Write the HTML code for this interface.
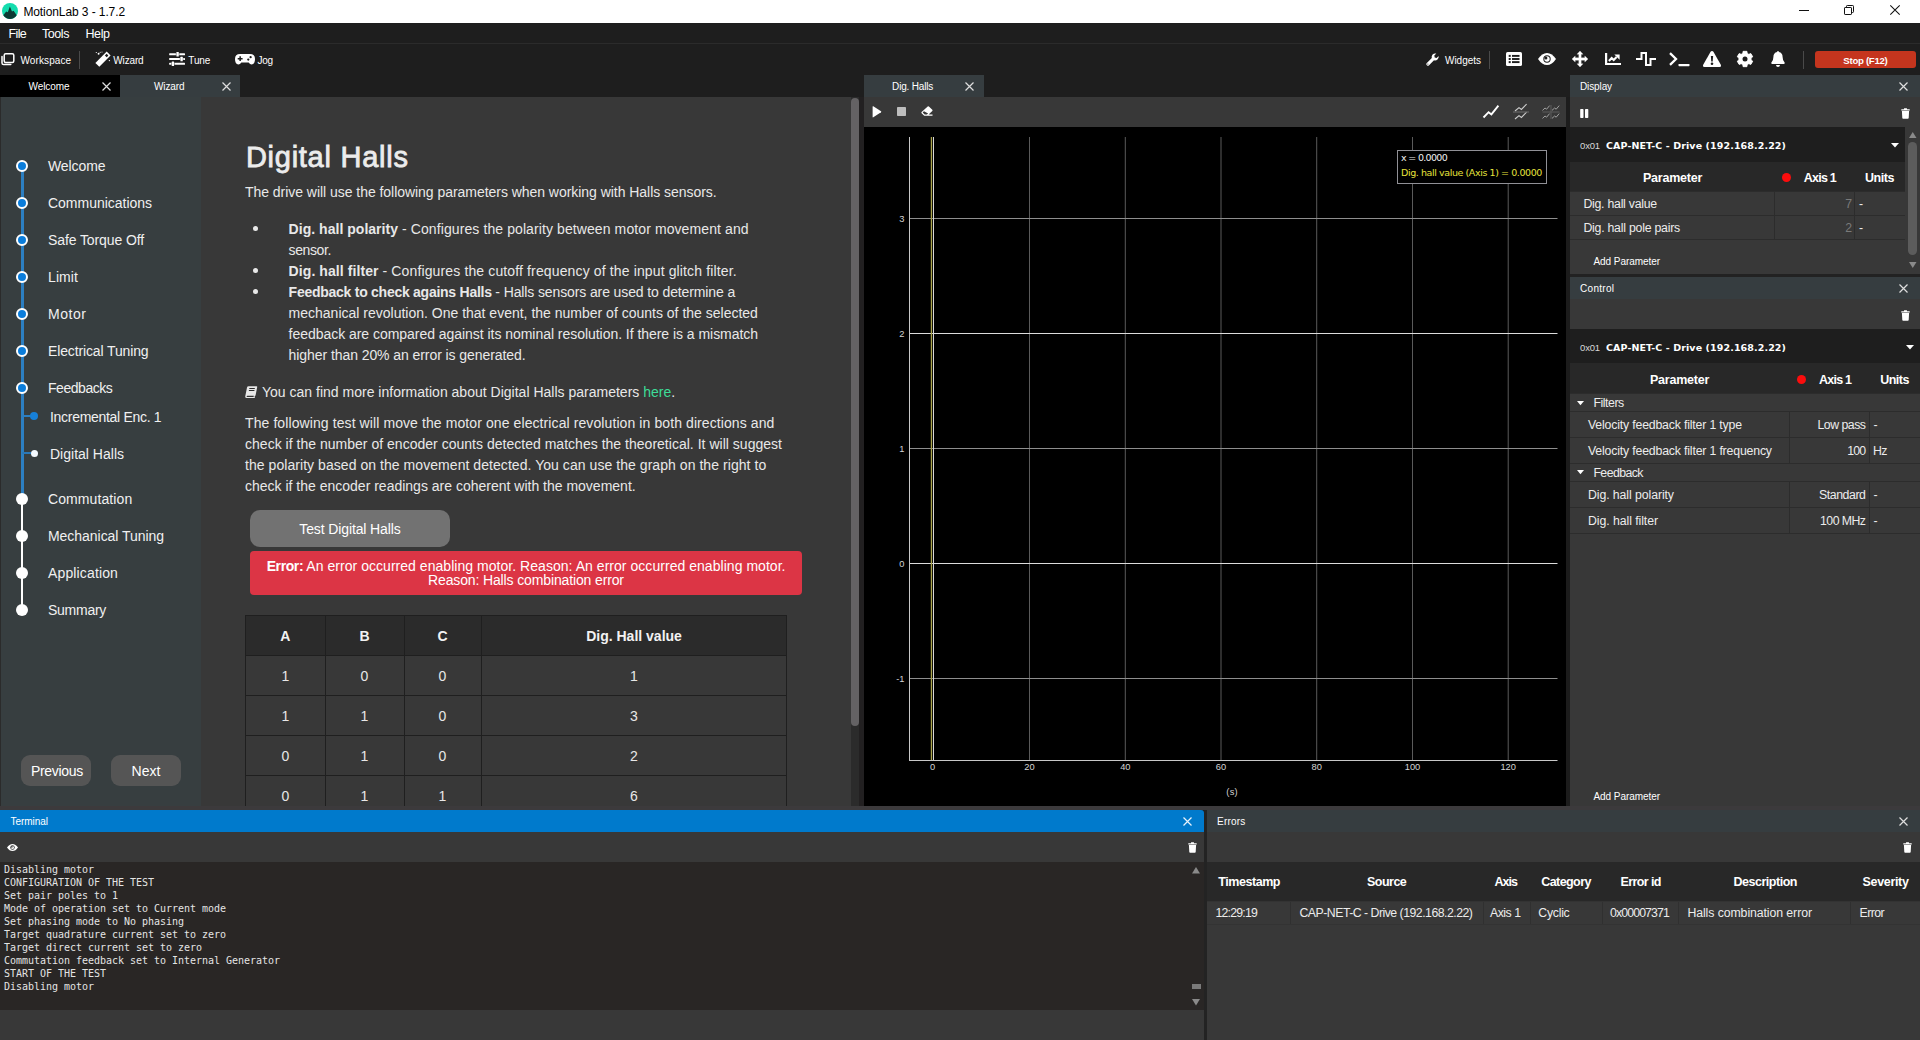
<!DOCTYPE html>
<html><head><meta charset="utf-8"><title>MotionLab 3 - 1.7.2</title>
<style>
*{box-sizing:border-box;margin:0;padding:0}
html,body{width:1920px;height:1040px;overflow:hidden;background:#1e1e1e;font-family:"Liberation Sans",sans-serif;color:#fff}
.a{position:absolute}
.t{position:absolute;white-space:pre;line-height:1}
svg{position:absolute;overflow:visible}
</style></head><body>
<div class="a" style="left:0px;top:0px;width:1920px;height:23px;background:#fff;"></div>
<svg style="left:1px;top:2.2px" width="18" height="18" viewBox="0 0 18 18"><circle cx="9" cy="9" r="8" fill="#14dcae"/><path d="M2.3 13.3 L5.2 9.6 L6.8 10.2 L8.9 4.4 L11 9.4 L12.6 8.8 L15.7 13.3 A8 8 0 0 1 2.3 13.3Z" fill="#0d3a34"/></svg>
<div class="t" style="left:23.40px;top:6.00px;font-size:12px;letter-spacing:-0.093px;color:#000;">MotionLab 3 - 1.7.2</div>
<svg style="left:1799px;top:10px" width="12" height="2"><rect x="0" y="0" width="10" height="1" fill="#111"/></svg>
<svg style="left:1843px;top:4px" width="12" height="12" viewBox="0 0 12 12" fill="none" stroke="#111" stroke-width="1"><rect x="1.5" y="3.5" width="7" height="7" rx="0.6"/><path d="M3.5 3.5V2.3Q3.5 1.5 4.3 1.5H9.7Q10.5 1.5 10.5 2.3V7.7Q10.5 8.5 9.7 8.5H8.5"/></svg>
<svg style="left:1890px;top:5px" width="10" height="10" viewBox="0 0 10 10" stroke="#111" stroke-width="1.05"><path d="M0.3 0.3L9.7 9.7M9.7 0.3L0.3 9.7"/></svg>
<div class="a" style="left:0px;top:23px;width:1920px;height:21px;background:#1e1e1e;border-bottom:1px solid #2b2b2b"></div>
<div class="t" style="left:8.60px;top:27.75px;font-size:12.5px;letter-spacing:-0.689px;">File</div>
<div class="t" style="left:42.00px;top:27.75px;font-size:12.5px;letter-spacing:-0.438px;">Tools</div>
<div class="t" style="left:85.50px;top:27.75px;font-size:12.5px;letter-spacing:-0.405px;">Help</div>
<div class="a" style="left:0px;top:44px;width:1920px;height:31px;background:#1e1e1e;"></div>
<svg style="left:0.5px;top:53.3px" width="14" height="13" viewBox="0 0 14 13" ><rect x="3.2" y="0.8" width="9.6" height="8.6" rx="1.5" fill="none" stroke="#fff" stroke-width="1.5"/><path d="M1 3.5V10Q1 11.6 2.6 11.6H9.8" fill="none" stroke="#fff" stroke-width="1.5" stroke-linecap="round"/></svg>
<div class="t" style="left:20.50px;top:55.50px;font-size:10px;letter-spacing:0.097px;">Workspace</div>
<div class="a" style="left:79px;top:51px;width:1px;height:18px;background:#4a4a4a;"></div>
<svg style="left:95px;top:51px" width="16" height="16" viewBox="0 0 16 16" ><path d="M11.7 0.5L15.6 4.4L4.3 15.8L0.4 11.9Z" fill="#fff"/><path d="M11.6 2.7L13.4 4.5L11.7 6.2L9.9 4.4Z" fill="#1e1e1e"/><circle cx="1.3" cy="1.5" r="0.6" fill="#fff"/><circle cx="3.6" cy="2.8" r="0.95" fill="#fff"/><circle cx="5.2" cy="1.2" r="0.55" fill="#fff"/><circle cx="7" cy="1" r="0.5" fill="#fff"/><circle cx="14.4" cy="9.6" r="0.7" fill="#fff"/></svg>
<div class="t" style="left:113.30px;top:55.50px;font-size:10px;letter-spacing:-0.152px;">Wizard</div>
<svg style="left:169px;top:52.2px" width="16" height="14" viewBox="0 0 16 14" ><rect x="0.2" y="1.2000000000000002" width="15.8" height="2" rx="0.5" fill="#fff"/><rect x="7.3999999999999995" y="0.0" width="2.4" height="4.4" rx="0.5" fill="#fff"/><rect x="9.799999999999999" y="1.0000000000000002" width="0.55" height="2.4" fill="#1e1e1e" opacity="0.75"/><rect x="6.85" y="1.0000000000000002" width="0.55" height="2.4" fill="#1e1e1e" opacity="0.75"/><rect x="0.2" y="6" width="15.8" height="2" rx="0.5" fill="#fff"/><rect x="11.4" y="4.8" width="2.4" height="4.4" rx="0.5" fill="#fff"/><rect x="13.799999999999999" y="5.8" width="0.55" height="2.4" fill="#1e1e1e" opacity="0.75"/><rect x="10.85" y="5.8" width="0.55" height="2.4" fill="#1e1e1e" opacity="0.75"/><rect x="0.2" y="10.8" width="15.8" height="2" rx="0.5" fill="#fff"/><rect x="2.7" y="9.600000000000001" width="2.4" height="4.4" rx="0.5" fill="#fff"/><rect x="5.1" y="10.600000000000001" width="0.55" height="2.4" fill="#1e1e1e" opacity="0.75"/><rect x="2.15" y="10.600000000000001" width="0.55" height="2.4" fill="#1e1e1e" opacity="0.75"/></svg>
<div class="t" style="left:188.30px;top:55.50px;font-size:10px;letter-spacing:-0.130px;">Tune</div>
<svg style="left:234.8px;top:53.8px" width="20" height="11" viewBox="0 0 20 11" ><path d="M5 0H15Q20 0 20 5Q20 10.4 16.6 10.4Q15 10.4 13.6 8.4H6.4Q5 10.4 3.4 10.4Q0 10.4 0 5Q0 0 5 0Z" fill="#fff"/><path d="M4.4 2.2H5.9V3.9H7.6V5.4H5.9V7.1H4.4V5.4H2.7V3.9H4.4Z" fill="#1e1e1e"/><circle cx="15.6" cy="3.2" r="1.15" fill="#1e1e1e"/><circle cx="13.3" cy="5.6" r="1.15" fill="#1e1e1e"/></svg>
<div class="t" style="left:257.60px;top:55.50px;font-size:10px;letter-spacing:-0.342px;">Jog</div>
<svg style="left:1425.5px;top:52.5px" width="13" height="13" viewBox="0 0 13 13" ><path d="M12.6 2.9 L10.6 4.9 L8.7 4.5 L8.3 2.6 L10.3 0.6 Q8.2 -0.1 6.6 1.5 Q5.2 3 5.8 5 L0.6 10.2 Q-0.1 11 0.6 11.9 L1.1 12.4 Q2 13.1 2.8 12.4 L8 7.2 Q10 7.8 11.5 6.4 Q13.1 4.8 12.6 2.9Z" fill="#fff"/><circle cx="1.9" cy="11.1" r="0.55" fill="#1e1e1e"/></svg>
<div class="t" style="left:1445.00px;top:55.50px;font-size:10px;letter-spacing:-0.018px;">Widgets</div>
<div class="a" style="left:1489px;top:51px;width:1px;height:18px;background:#4a4a4a;"></div>
<svg style="left:1506px;top:52px" width="16" height="14" viewBox="0 0 16 14" ><rect x="0" y="0" width="16" height="14" rx="1.6" fill="#fff"/><rect x="2.7" y="2.9" width="2" height="2" fill="#1e1e1e"/><rect x="6" y="2.95" width="7.5" height="1.9" fill="#1e1e1e"/><rect x="2.7" y="6" width="2" height="2" fill="#1e1e1e"/><rect x="6" y="6.05" width="7.5" height="1.9" fill="#1e1e1e"/><rect x="2.7" y="9.1" width="2" height="2" fill="#1e1e1e"/><rect x="6" y="9.15" width="7.5" height="1.9" fill="#1e1e1e"/></svg>
<svg style="left:1538px;top:52.8px" width="18" height="12" viewBox="0 0 18 12" ><path d="M0 6Q4 0 9 0Q14 0 18 6Q14 12 9 12Q4 12 0 6Z" fill="#fff"/><circle cx="9" cy="6" r="3.7" fill="#1e1e1e"/><circle cx="9" cy="6" r="2.7" fill="#fff"/><circle cx="7.9" cy="4.9" r="1.5" fill="#1e1e1e"/></svg>
<svg style="left:1572px;top:51px" width="16" height="16" viewBox="0 0 16 16" ><path d="M8 0L11.0 3.2H9.2V6.8H12.8V5.0L16 8L12.8 11.0V9.2H9.2V12.8H11.0L8 16L5.0 12.8H6.8V9.2H3.2V11.0L0 8L3.2 5.0V6.8H6.8V3.2H5.0Z" fill="#fff" stroke="#fff" stroke-width="0.3" stroke-linejoin="round"/></svg>
<svg style="left:1605px;top:53px" width="16" height="12" viewBox="0 0 16 12" ><path d="M0 0H2.2V9.9H16V12H0Z" fill="#fff"/><path d="M3.9 8L6.7 5.1L8.7 7L11.6 4" fill="none" stroke="#fff" stroke-width="2.1" stroke-linejoin="miter"/><path d="M9.3 1.5H14.6V6.8Z" fill="#fff"/></svg>
<svg style="left:1636px;top:52px" width="20" height="14" viewBox="0 0 20 14" ><path d="M0 7H5.5V1H10V13H14.5V7H20" fill="none" stroke="#fff" stroke-width="2"/></svg>
<svg style="left:1668.5px;top:51.8px" width="21" height="15" viewBox="0 0 21 15" ><path d="M1 1.2L7 7L1 12.8" fill="none" stroke="#fff" stroke-width="2.3" stroke-linejoin="miter"/><rect x="9.5" y="12" width="11" height="2.2" rx="0.6" fill="#fff"/></svg>
<svg style="left:1703px;top:51px" width="18" height="16" viewBox="0 0 18 16" ><path d="M9 0Q9.9 0 10.4 0.8L17.8 13.8Q18.6 16 16.6 16H1.4Q-0.6 16 0.2 13.8L7.6 0.8Q8.1 0 9 0Z" fill="#fff"/><path d="M7.9 5H10.1L9.75 10.5H8.25Z" fill="#1e1e1e"/><circle cx="9" cy="12.7" r="1.3" fill="#1e1e1e"/></svg>
<svg style="left:1737px;top:51px" width="16" height="16" viewBox="0 0 16 16" ><path d="M6.08 0.33L9.92 0.33L10.16 2.38L11.88 3.36L13.82 2.54L15.74 5.79L14.04 7.02L14.04 8.98L15.74 10.21L13.82 13.46L11.88 12.64L10.16 13.62L9.92 15.67L6.08 15.67L5.84 13.62L4.12 12.64L2.18 13.46L0.26 10.21L1.96 8.98L1.96 7.02L0.26 5.79L2.18 2.54L4.12 3.36L5.84 2.38Z" fill="#fff" stroke="#fff" stroke-width="0.9" stroke-linejoin="round"/><circle cx="8" cy="8" r="2.5" fill="#1e1e1e"/></svg>
<svg style="left:1771px;top:51px" width="14" height="16" viewBox="0 0 14 16" ><path d="M7 0Q7.9 0 7.9 1Q11.6 1.8 11.6 6Q11.6 9.6 13.6 11.4Q14.2 12.6 13 13H1Q-0.2 12.6 0.4 11.4Q2.4 9.6 2.4 6Q2.4 1.8 6.1 1Q6.1 0 7 0Z" fill="#fff"/><path d="M5 14H9Q8.8 16 7 16Q5.2 16 5 14Z" fill="#fff"/></svg>
<div class="a" style="left:1803px;top:51px;width:1px;height:18px;background:#4a4a4a;"></div>
<div class="a" style="left:1815px;top:51px;width:101px;height:17px;background:#c5351e;border-radius:3px"></div>
<div class="t" style="left:1843.36px;top:55.70px;font-size:9.6px;letter-spacing:-0.287px;font-weight:bold;">Stop (F12)</div>
<div class="a" style="left:0px;top:75px;width:120px;height:22px;background:#000;"></div>
<div class="a" style="left:120px;top:75px;width:120px;height:22px;background:#363d40;"></div>
<div class="t" style="left:28.47px;top:81.50px;font-size:10px;letter-spacing:-0.069px;">Welcome</div>
<div class="t" style="left:154.00px;top:81.50px;font-size:10px;letter-spacing:-0.102px;">Wizard</div>
<svg style="left:102.3px;top:81.7px" width="9" height="9" viewBox="0 0 9 9" ><path d="M0.5 0.5L8.5 8.5M8.5 0.5L0.5 8.5" stroke="#dedede" stroke-width="1.2" fill="none"/></svg>
<svg style="left:222.3px;top:81.7px" width="9" height="9" viewBox="0 0 9 9" ><path d="M0.5 0.5L8.5 8.5M8.5 0.5L0.5 8.5" stroke="#dedede" stroke-width="1.2" fill="none"/></svg>
<div class="a" style="left:0px;top:97px;width:862px;height:709px;background:#2b2b2b;"></div>
<div class="a" style="left:1px;top:97px;width:200.3px;height:709px;background:#373e40;"></div>
<div class="a" style="left:201.3px;top:97px;width:649.7px;height:709px;background:#383838;"></div>
<div class="a" style="left:851px;top:97.5px;width:8px;height:628.5px;background:#646264;border-radius:4px"></div>
<div class="a" style="left:20.5px;top:166px;width:3px;height:333px;background:#2c7fc2;"></div>
<div class="a" style="left:21px;top:499px;width:2px;height:111px;background:#fff;"></div>
<div class="a" style="left:16px;top:160px;width:12px;height:12px;border-radius:50%;background:#0b7ddb;border:2px solid #fff"></div>
<div class="t" style="left:48.00px;top:159.00px;font-size:14px;letter-spacing:-0.097px;color:#f0f0f0;">Welcome</div>
<div class="a" style="left:16px;top:197px;width:12px;height:12px;border-radius:50%;background:#0b7ddb;border:2px solid #fff"></div>
<div class="t" style="left:48.00px;top:196.00px;font-size:14px;letter-spacing:-0.016px;color:#f0f0f0;">Communications</div>
<div class="a" style="left:16px;top:234px;width:12px;height:12px;border-radius:50%;background:#0b7ddb;border:2px solid #fff"></div>
<div class="t" style="left:48.00px;top:233.00px;font-size:14px;letter-spacing:-0.102px;color:#f0f0f0;">Safe Torque Off</div>
<div class="a" style="left:16px;top:271px;width:12px;height:12px;border-radius:50%;background:#0b7ddb;border:2px solid #fff"></div>
<div class="t" style="left:48.00px;top:270.00px;font-size:14px;letter-spacing:0.091px;color:#f0f0f0;">Limit</div>
<div class="a" style="left:16px;top:308px;width:12px;height:12px;border-radius:50%;background:#0b7ddb;border:2px solid #fff"></div>
<div class="t" style="left:48.00px;top:307.00px;font-size:14px;letter-spacing:0.547px;color:#f0f0f0;">Motor</div>
<div class="a" style="left:16px;top:345px;width:12px;height:12px;border-radius:50%;background:#0b7ddb;border:2px solid #fff"></div>
<div class="t" style="left:48.00px;top:344.00px;font-size:14px;letter-spacing:-0.129px;color:#f0f0f0;">Electrical Tuning</div>
<div class="a" style="left:16px;top:382px;width:12px;height:12px;border-radius:50%;background:#0b7ddb;border:2px solid #fff"></div>
<div class="t" style="left:48.00px;top:381.00px;font-size:14px;letter-spacing:-0.461px;color:#f0f0f0;">Feedbacks</div>
<div class="a" style="left:16px;top:493px;width:12px;height:12px;border-radius:50%;background:#fff"></div>
<div class="t" style="left:48.00px;top:492.00px;font-size:14px;letter-spacing:0.098px;color:#f0f0f0;">Commutation</div>
<div class="a" style="left:16px;top:530px;width:12px;height:12px;border-radius:50%;background:#fff"></div>
<div class="t" style="left:48.00px;top:529.00px;font-size:14px;letter-spacing:-0.040px;color:#f0f0f0;">Mechanical Tuning</div>
<div class="a" style="left:16px;top:567px;width:12px;height:12px;border-radius:50%;background:#fff"></div>
<div class="t" style="left:48.00px;top:566.00px;font-size:14px;letter-spacing:0.139px;color:#f0f0f0;">Application</div>
<div class="a" style="left:16px;top:604px;width:12px;height:12px;border-radius:50%;background:#fff"></div>
<div class="t" style="left:48.00px;top:603.00px;font-size:14px;letter-spacing:-0.268px;color:#f0f0f0;">Summary</div>
<div class="a" style="left:22px;top:415.2px;width:9px;height:2px;background:#2c7fc2;"></div>
<div class="a" style="left:30px;top:412.2px;width:8px;height:8px;background:#1780d8;border-radius:50%"></div>
<div class="t" style="left:50.00px;top:410.00px;font-size:14px;letter-spacing:-0.299px;color:#f0f0f0;">Incremental Enc. 1</div>
<div class="a" style="left:22px;top:452.2px;width:9px;height:1.8px;background:#2a78b8;"></div>
<div class="a" style="left:30.5px;top:449.6px;width:7px;height:7px;background:#f4faff;border-radius:50%"></div>
<div class="t" style="left:50.00px;top:447.00px;font-size:14px;letter-spacing:0.008px;color:#f0f0f0;">Digital Halls</div>
<div class="a" style="left:21px;top:755px;width:70px;height:31px;background:#555;border-radius:9px"></div>
<div class="a" style="left:111px;top:755px;width:70px;height:31px;background:#555;border-radius:9px"></div>
<div class="t" style="left:31.03px;top:764.00px;font-size:14px;letter-spacing:-0.332px;">Previous</div>
<div class="t" style="left:131.53px;top:764.00px;font-size:14px;letter-spacing:0.055px;">Next</div>
<div class="t" style="left:245.90px;top:142.50px;font-size:29px;letter-spacing:0.741px;color:#ececec;-webkit-text-stroke:0.8px #ececec;">Digital Halls</div>
<div class="t" style="left:245.00px;top:185.00px;font-size:14px;letter-spacing:-0.040px;color:#e8e8e8;">The drive will use the following parameters when working with Halls sensors.</div>
<div class="t" style="left:288.60px;top:222.00px;font-size:14px;letter-spacing:0.029px;font-weight:bold;color:#e8e8e8;">Dig. hall polarity</div>
<div class="t" style="left:398.00px;top:222.00px;font-size:14px;letter-spacing:0.097px;color:#e8e8e8;"> - Configures the polarity between motor movement and</div>
<div class="t" style="left:288.60px;top:243.00px;font-size:14px;letter-spacing:-0.389px;color:#e8e8e8;">sensor.</div>
<div class="t" style="left:288.60px;top:264.00px;font-size:14px;letter-spacing:0.078px;font-weight:bold;color:#e8e8e8;">Dig. hall filter</div>
<div class="t" style="left:378.50px;top:264.00px;font-size:14px;letter-spacing:0.133px;color:#e8e8e8;"> - Configures the cutoff frequency of the input glitch filter.</div>
<div class="t" style="left:288.60px;top:285.00px;font-size:14px;letter-spacing:-0.259px;font-weight:bold;color:#e8e8e8;">Feedback to check agains Halls</div>
<div class="t" style="left:491.60px;top:285.00px;font-size:14px;letter-spacing:-0.118px;color:#e8e8e8;"> - Halls sensors are used to determine a</div>
<div class="t" style="left:288.60px;top:306.00px;font-size:14px;color:#e8e8e8;">mechanical revolution. One that event, the number of counts of the selected</div>
<div class="t" style="left:288.60px;top:327.00px;font-size:14px;letter-spacing:-0.038px;color:#e8e8e8;">feedback are compared against its nominal resolution. If there is a mismatch</div>
<div class="t" style="left:288.60px;top:348.00px;font-size:14px;letter-spacing:-0.071px;color:#e8e8e8;">higher than 20% an error is generated.</div>
<div class="t" style="left:245.00px;top:416.00px;font-size:14px;letter-spacing:0.093px;color:#e8e8e8;">The following test will move the motor one electrical revolution in both directions and</div>
<div class="t" style="left:245.00px;top:437.00px;font-size:14px;letter-spacing:0.018px;color:#e8e8e8;">check if the number of encoder counts detected matches the theoretical. It will suggest</div>
<div class="t" style="left:245.00px;top:458.00px;font-size:14px;letter-spacing:0.054px;color:#e8e8e8;">the polarity based on the movement detected. You can use the graph on the right to</div>
<div class="t" style="left:245.00px;top:479.00px;font-size:14px;color:#e8e8e8;">check if the encoder readings are coherent with the movement.</div>
<div class="a" style="left:253px;top:225.9px;width:5.4px;height:5.4px;background:#e8e8e8;border-radius:50%"></div>
<div class="a" style="left:253px;top:267.90000000000003px;width:5.4px;height:5.4px;background:#e8e8e8;border-radius:50%"></div>
<div class="a" style="left:253px;top:288.90000000000003px;width:5.4px;height:5.4px;background:#e8e8e8;border-radius:50%"></div>
<svg style="left:245px;top:386px" width="13" height="12" viewBox="0 0 13 12" ><path d="M3.5 0.2H11.5Q12.4 0.2 12.2 1.1L10.6 9.2Q10.4 9.9 9.8 10L9.6 10.9Q10.2 11 10 11.5Q9.9 11.9 9.4 11.9H1.6Q-0.1 11.9 0.3 10.1L2 1.5Q2.3 0.2 3.5 0.2Z" fill="#e8e8e8"/><path d="M2.3 9.8H8.8L8.6 10.9H2.1Q1.5 10.8 1.6 10.3Q1.8 9.8 2.3 9.8Z" fill="#333"/><path d="M4.4 2H9.9L9.7 3H4.2ZM4 4.1H9.5L9.3 5.1H3.8Z" fill="#2c2c2c"/></svg>
<div class="t" style="left:262.00px;top:385.00px;font-size:14px;letter-spacing:0.007px;color:#e8e8e8;">You can find more information about Digital Halls parameters <span style="color:#3ddc97">here</span>.</div>
<div class="a" style="left:250px;top:510px;width:200px;height:37px;background:#727272;border-radius:10px"></div>
<div class="t" style="left:299.29px;top:522.00px;font-size:14px;letter-spacing:-0.120px;">Test Digital Halls</div>
<div class="a" style="left:250px;top:551px;width:552px;height:44px;background:#dc3545;border-radius:4px"></div>
<div class="t" style="left:266.70px;top:559.00px;font-size:14px;letter-spacing:-0.401px;font-weight:bold;">Error:</div>
<div class="t" style="left:303.20px;top:559.00px;font-size:14px;letter-spacing:0.039px;"> An error occurred enabling motor. Reason: An error occurred enabling motor.</div>
<div class="t" style="left:428.00px;top:573.00px;font-size:14px;letter-spacing:-0.132px;">Reason: Halls combination error</div>
<div class="a" style="left:245px;top:615px;width:542px;height:191px;background:#1f1f1f;"></div>
<div class="a" style="left:246px;top:616px;width:79px;height:39px;background:#2b2b2b;"></div>
<div class="a" style="left:326px;top:616px;width:78px;height:39px;background:#2b2b2b;"></div>
<div class="a" style="left:405px;top:616px;width:76px;height:39px;background:#2b2b2b;"></div>
<div class="a" style="left:482px;top:616px;width:304px;height:39px;background:#2b2b2b;"></div>
<div class="a" style="left:246px;top:656px;width:79px;height:39px;background:#383838;"></div>
<div class="a" style="left:326px;top:656px;width:78px;height:39px;background:#383838;"></div>
<div class="a" style="left:405px;top:656px;width:76px;height:39px;background:#383838;"></div>
<div class="a" style="left:482px;top:656px;width:304px;height:39px;background:#383838;"></div>
<div class="a" style="left:246px;top:696px;width:79px;height:39px;background:#383838;"></div>
<div class="a" style="left:326px;top:696px;width:78px;height:39px;background:#383838;"></div>
<div class="a" style="left:405px;top:696px;width:76px;height:39px;background:#383838;"></div>
<div class="a" style="left:482px;top:696px;width:304px;height:39px;background:#383838;"></div>
<div class="a" style="left:246px;top:736px;width:79px;height:39px;background:#383838;"></div>
<div class="a" style="left:326px;top:736px;width:78px;height:39px;background:#383838;"></div>
<div class="a" style="left:405px;top:736px;width:76px;height:39px;background:#383838;"></div>
<div class="a" style="left:482px;top:736px;width:304px;height:39px;background:#383838;"></div>
<div class="a" style="left:246px;top:776px;width:79px;height:30px;background:#383838;"></div>
<div class="a" style="left:326px;top:776px;width:78px;height:30px;background:#383838;"></div>
<div class="a" style="left:405px;top:776px;width:76px;height:30px;background:#383838;"></div>
<div class="a" style="left:482px;top:776px;width:304px;height:30px;background:#383838;"></div>
<div class="t" style="left:280.25px;top:629.00px;font-size:14px;font-weight:bold;color:#f2f2f2;">A</div>
<div class="t" style="left:359.45px;top:629.00px;font-size:14px;font-weight:bold;color:#f2f2f2;">B</div>
<div class="t" style="left:437.45px;top:629.00px;font-size:14px;font-weight:bold;color:#f2f2f2;">C</div>
<div class="t" style="left:586.16px;top:629.00px;font-size:14px;font-weight:bold;color:#f2f2f2;">Dig. Hall value</div>
<div class="t" style="left:281.41px;top:669.00px;font-size:14px;color:#e8e8e8;">1</div>
<div class="t" style="left:360.61px;top:669.00px;font-size:14px;color:#e8e8e8;">0</div>
<div class="t" style="left:438.61px;top:669.00px;font-size:14px;color:#e8e8e8;">0</div>
<div class="t" style="left:630.11px;top:669.00px;font-size:14px;color:#e8e8e8;">1</div>
<div class="t" style="left:281.41px;top:709.00px;font-size:14px;color:#e8e8e8;">1</div>
<div class="t" style="left:360.61px;top:709.00px;font-size:14px;color:#e8e8e8;">1</div>
<div class="t" style="left:438.61px;top:709.00px;font-size:14px;color:#e8e8e8;">0</div>
<div class="t" style="left:630.11px;top:709.00px;font-size:14px;color:#e8e8e8;">3</div>
<div class="t" style="left:281.41px;top:749.00px;font-size:14px;color:#e8e8e8;">0</div>
<div class="t" style="left:360.61px;top:749.00px;font-size:14px;color:#e8e8e8;">1</div>
<div class="t" style="left:438.61px;top:749.00px;font-size:14px;color:#e8e8e8;">0</div>
<div class="t" style="left:630.11px;top:749.00px;font-size:14px;color:#e8e8e8;">2</div>
<div class="t" style="left:281.41px;top:789.00px;font-size:14px;color:#e8e8e8;">0</div>
<div class="t" style="left:360.61px;top:789.00px;font-size:14px;color:#e8e8e8;">1</div>
<div class="t" style="left:438.61px;top:789.00px;font-size:14px;color:#e8e8e8;">1</div>
<div class="t" style="left:630.11px;top:789.00px;font-size:14px;color:#e8e8e8;">6</div>
<div class="a" style="left:859px;top:97px;width:5px;height:709px;background:#222021;"></div>
<div class="a" style="left:863.5px;top:75px;width:120px;height:22px;background:#363d40;"></div>
<div class="t" style="left:892.11px;top:81.50px;font-size:10px;letter-spacing:-0.178px;">Dig. Halls</div>
<svg style="left:965.3px;top:81.7px" width="9" height="9" viewBox="0 0 9 9" ><path d="M0.5 0.5L8.5 8.5M8.5 0.5L0.5 8.5" stroke="#dedede" stroke-width="1.2" fill="none"/></svg>
<div class="a" style="left:864px;top:97px;width:702px;height:30px;background:#383838;"></div>
<svg style="left:871.5px;top:105.5px" width="10" height="12" viewBox="0 0 10 12" ><path d="M0.6 0.6Q0.6 0 1.3 0.3L9 5.3Q9.6 5.8 9 6.3L1.3 11.3Q0.6 11.6 0.6 11Z" fill="#fff"/></svg>
<svg style="left:897px;top:107px" width="9" height="9" viewBox="0 0 9 9" ><rect x="0" y="0" width="9" height="9" rx="0.8" fill="#bdbdbd"/></svg>
<svg style="left:920.8px;top:106.3px" width="12" height="10" viewBox="0 0 12 10" ><path d="M6.7 0.5Q7.3 0 7.9 0.5L11.3 3.8Q11.9 4.4 11.3 5L7.6 8.6H11.5V9.8H3.2L0.6 7.2Q0 6.6 0.6 6Z M3 5.2L1.9 6.3Q1.7 6.6 1.9 6.8L3.7 8.6H5.9L7.1 7.4Z" fill="#fff" fill-rule="evenodd"/></svg>
<svg style="left:1481px;top:103px" width="20" height="18" viewBox="0 0 20 18"><path d="M2.5 14.5L7.6 9.2L10.4 11.4L17.4 2.6" fill="none" stroke="#fff" stroke-width="1.9" stroke-linejoin="miter"/></svg>
<svg style="left:1511px;top:103px" width="20" height="18" viewBox="0 0 20 18" fill="none" stroke="#cfcfcf" stroke-width="1.1"><path d="M4 8L8 4.6L10.4 6.4L15.6 1.2"/><path d="M4 16L8 12.6L10.4 14.4L15.6 9.2"/><path d="M2 9H18" stroke="#6a6a6a"/></svg>
<svg style="left:1541px;top:103px" width="20" height="18" viewBox="0 0 20 18" fill="none" stroke="#a0a0a0" stroke-width="1"><path d="M1.5 7.4L4 5L5.6 6.2L8.6 2.6"/><path d="M11 7.4L13.6 5L15.2 6.2L18.2 2.6"/><path d="M1.5 15.4L4 13L5.6 14.2L8.6 10.6"/><path d="M11 15.4L13.6 13L15.2 14.2L18.2 10.6"/><path d="M1.5 9H18.5M10 2V16" stroke="#5c5c5c"/></svg>
<div class="a" style="left:864px;top:127px;width:702px;height:679px;background:#000;"></div>
<svg style="left:864px;top:127px" width="702" height="678" viewBox="0 0 702 678"><rect x="165.0" y="10" width="1" height="623" fill="#5a5a5a"/><rect x="260.8" y="10" width="1" height="623" fill="#5a5a5a"/><rect x="356.5" y="10" width="1" height="623" fill="#5a5a5a"/><rect x="452.2" y="10" width="1" height="623" fill="#5a5a5a"/><rect x="548.0" y="10" width="1" height="623" fill="#5a5a5a"/><rect x="643.7" y="10" width="1" height="623" fill="#5a5a5a"/><rect x="46" y="91.0" width="647.5" height="1" fill="#8e8e8e"/><rect x="46" y="206.0" width="647.5" height="1" fill="#dcdcdc"/><rect x="46" y="321.0" width="647.5" height="1" fill="#8e8e8e"/><rect x="46" y="436.0" width="647.5" height="1" fill="#dcdcdc"/><rect x="46" y="551.0" width="647.5" height="1" fill="#8e8e8e"/><rect x="45" y="10" width="1" height="624" fill="#c8c8c8"/><rect x="45" y="633" width="648.5" height="1" fill="#c8c8c8"/><rect x="66.8" y="10" width="1.3" height="623" fill="#aaa44c"/><rect x="69" y="10" width="1" height="623" fill="#d8d8d8"/></svg>
<div class="t" style="left:899.33px;top:215.35px;font-size:9.3px;color:#d4d4d4;">3</div>
<div class="t" style="left:899.33px;top:330.35px;font-size:9.3px;color:#d4d4d4;">2</div>
<div class="t" style="left:899.33px;top:445.35px;font-size:9.3px;color:#d4d4d4;">1</div>
<div class="t" style="left:899.33px;top:560.35px;font-size:9.3px;color:#d4d4d4;">0</div>
<div class="t" style="left:896.23px;top:675.35px;font-size:9.3px;color:#d4d4d4;">-1</div>
<div class="t" style="left:929.91px;top:763.35px;font-size:9.3px;color:#d4d4d4;">0</div>
<div class="t" style="left:1024.33px;top:763.35px;font-size:9.3px;color:#d4d4d4;">20</div>
<div class="t" style="left:1120.13px;top:763.35px;font-size:9.3px;color:#d4d4d4;">40</div>
<div class="t" style="left:1215.83px;top:763.35px;font-size:9.3px;color:#d4d4d4;">60</div>
<div class="t" style="left:1311.53px;top:763.35px;font-size:9.3px;color:#d4d4d4;">80</div>
<div class="t" style="left:1404.74px;top:763.35px;font-size:9.3px;color:#d4d4d4;">100</div>
<div class="t" style="left:1500.44px;top:763.35px;font-size:9.3px;color:#d4d4d4;">120</div>
<div class="t" style="left:1226.28px;top:788.35px;font-size:9.3px;letter-spacing:0.300px;color:#d4d4d4;">(s)</div>
<div class="a" style="left:1397px;top:150px;width:150px;height:34px;border:1px solid #909096;background:#000"></div>
<div class="t" style="left:1401.00px;top:152.75px;font-size:9.5px;letter-spacing:-0.686px;font-family:'DejaVu Sans','Liberation Sans',sans-serif;color:#f0f0f0;">x = 0.0000</div>
<div class="t" style="left:1401.00px;top:167.75px;font-size:9.5px;letter-spacing:-0.411px;font-family:'DejaVu Sans','Liberation Sans',sans-serif;color:#e6e23c;">Dig. hall value (Axis 1) = 0.0000</div>
<div class="a" style="left:1566px;top:97px;width:4.3px;height:709px;background:#1c1c1c;"></div>
<div class="a" style="left:1570px;top:75px;width:350px;height:22px;background:#363d40;"></div>
<div class="t" style="left:1580.00px;top:81.50px;font-size:10px;letter-spacing:-0.112px;">Display</div>
<svg style="left:1898.7px;top:81.7px" width="9" height="9" viewBox="0 0 9 9" ><path d="M0.5 0.5L8.5 8.5M8.5 0.5L0.5 8.5" stroke="#dedede" stroke-width="1.2" fill="none"/></svg>
<div class="a" style="left:1570px;top:97px;width:350px;height:177px;background:#383838;"></div>
<svg style="left:1580px;top:108.5px" width="9" height="9" viewBox="0 0 9 9" ><rect x="0.2" y="0" width="3.3" height="9" rx="0.7" fill="#fff"/><rect x="5" y="0" width="3.3" height="9" rx="0.7" fill="#fff"/></svg>
<svg style="left:1901.3px;top:107.5px" width="9" height="11" viewBox="0 0 9 11" ><path d="M0.3 1.3H3V0.6Q3 0.2 3.4 0.2H5.6Q6 0.2 6 0.6V1.3H8.7V2.5H0.3Z M0.9 3.1H8.1L7.7 10Q7.65 10.8 6.9 10.8H2.1Q1.35 10.8 1.3 10Z" fill="#fff"/></svg>
<div class="a" style="left:1570px;top:127px;width:335px;height:35px;background:#1e1e1e;"></div>
<div class="t" style="left:1580.00px;top:140.75px;font-size:9.5px;letter-spacing:-0.148px;color:#d8d8d8;">0x01</div>
<div class="t" style="left:1606.00px;top:140.75px;font-size:9.5px;letter-spacing:0.099px;font-family:'DejaVu Sans','Liberation Sans',sans-serif;font-weight:bold;color:#fff;">CAP-NET-C - Drive (192.168.2.22)</div>
<svg style="left:1891.0px;top:142.8px" width="8" height="4.4" viewBox="0 0 8 4.4" ><path d="M0 0H8L4.0 4.4Z" fill="#fff"/></svg>
<div class="a" style="left:1570px;top:162px;width:335px;height:29.5px;background:#282828;"></div>
<div class="t" style="left:1643.00px;top:171.75px;font-size:12.5px;letter-spacing:-0.238px;font-weight:bold;">Parameter</div>
<div class="a" style="left:1781.5px;top:173px;width:9px;height:9px;background:#fb0d0d;border-radius:50%"></div>
<div class="t" style="left:1803.80px;top:171.75px;font-size:12.5px;letter-spacing:-0.771px;font-weight:bold;">Axis 1</div>
<div class="t" style="left:1865.00px;top:171.75px;font-size:12.5px;letter-spacing:-0.450px;font-weight:bold;">Units</div>
<div class="a" style="left:1570px;top:191px;width:335px;height:1px;background:#2c2c2c;"></div>
<div class="a" style="left:1570px;top:215px;width:335px;height:1px;background:#2c2c2c;"></div>
<div class="a" style="left:1570px;top:239px;width:335px;height:1px;background:#2c2c2c;"></div>
<div class="a" style="left:1774px;top:191px;width:1px;height:49px;background:#2c2c2c;"></div>
<div class="a" style="left:1854px;top:191px;width:1px;height:49px;background:#2c2c2c;"></div>
<div class="t" style="left:1583.40px;top:197.85px;font-size:12.3px;letter-spacing:-0.246px;color:#ececec;">Dig. hall value</div>
<div class="t" style="left:1845.16px;top:197.85px;font-size:12.3px;color:#7a7a7a;">7</div>
<div class="t" style="left:1859.00px;top:197.85px;font-size:12.3px;color:#ececec;">-</div>
<div class="t" style="left:1583.40px;top:221.85px;font-size:12.3px;letter-spacing:-0.232px;color:#ececec;">Dig. hall pole pairs</div>
<div class="t" style="left:1845.16px;top:221.85px;font-size:12.3px;color:#7a7a7a;">2</div>
<div class="t" style="left:1859.00px;top:221.85px;font-size:12.3px;color:#ececec;">-</div>
<div class="t" style="left:1593.40px;top:256.50px;font-size:10px;letter-spacing:-0.051px;">Add Parameter</div>
<svg style="left:1908.75px;top:132.0px" width="7.5" height="6" viewBox="0 0 7.5 6" ><path d="M0 6H7.5L3.75 0Z" fill="#8a8a8a"/></svg>
<div class="a" style="left:1908px;top:142px;width:9px;height:113px;background:#5c5c5c;border-radius:4.5px"></div>
<svg style="left:1908.75px;top:262.0px" width="7.5" height="6" viewBox="0 0 7.5 6" ><path d="M0 0H7.5L3.75 6Z" fill="#8a8a8a"/></svg>
<div class="a" style="left:1570px;top:273.5px;width:350px;height:3.2px;background:#222;"></div>
<div class="a" style="left:1570px;top:276.7px;width:350px;height:22px;background:#363d40;"></div>
<div class="t" style="left:1580.00px;top:283.50px;font-size:10px;letter-spacing:0.309px;">Control</div>
<svg style="left:1898.7px;top:283.5px" width="9" height="9" viewBox="0 0 9 9" ><path d="M0.5 0.5L8.5 8.5M8.5 0.5L0.5 8.5" stroke="#dedede" stroke-width="1.2" fill="none"/></svg>
<div class="a" style="left:1570px;top:298.7px;width:350px;height:507.3px;background:#383838;"></div>
<svg style="left:1901.3px;top:309.5px" width="9" height="11" viewBox="0 0 9 11" ><path d="M0.3 1.3H3V0.6Q3 0.2 3.4 0.2H5.6Q6 0.2 6 0.6V1.3H8.7V2.5H0.3Z M0.9 3.1H8.1L7.7 10Q7.65 10.8 6.9 10.8H2.1Q1.35 10.8 1.3 10Z" fill="#fff"/></svg>
<div class="a" style="left:1570px;top:329px;width:350px;height:34.39999999999998px;background:#1e1e1e;"></div>
<div class="t" style="left:1580.00px;top:342.75px;font-size:9.5px;letter-spacing:-0.148px;color:#d8d8d8;">0x01</div>
<div class="t" style="left:1606.00px;top:342.75px;font-size:9.5px;letter-spacing:0.099px;font-family:'DejaVu Sans','Liberation Sans',sans-serif;font-weight:bold;color:#fff;">CAP-NET-C - Drive (192.168.2.22)</div>
<svg style="left:1905.8px;top:345.3px" width="8" height="4.4" viewBox="0 0 8 4.4" ><path d="M0 0H8L4.0 4.4Z" fill="#fff"/></svg>
<div class="a" style="left:1570px;top:363.4px;width:350px;height:30px;background:#282828;"></div>
<div class="t" style="left:1650.00px;top:373.75px;font-size:12.5px;letter-spacing:-0.238px;font-weight:bold;">Parameter</div>
<div class="a" style="left:1796.5px;top:374.5px;width:9px;height:9px;background:#fb0d0d;border-radius:50%"></div>
<div class="t" style="left:1819.00px;top:373.75px;font-size:12.5px;letter-spacing:-0.771px;font-weight:bold;">Axis 1</div>
<div class="t" style="left:1880.20px;top:373.75px;font-size:12.5px;letter-spacing:-0.490px;font-weight:bold;">Units</div>
<div class="a" style="left:1570px;top:393px;width:350px;height:1px;background:#2c2c2c;"></div>
<div class="a" style="left:1570px;top:411px;width:350px;height:1px;background:#2c2c2c;"></div>
<div class="a" style="left:1570px;top:437px;width:350px;height:1px;background:#2c2c2c;"></div>
<div class="a" style="left:1570px;top:463px;width:350px;height:1px;background:#2c2c2c;"></div>
<div class="a" style="left:1570px;top:481px;width:350px;height:1px;background:#2c2c2c;"></div>
<div class="a" style="left:1570px;top:507px;width:350px;height:1px;background:#2c2c2c;"></div>
<div class="a" style="left:1570px;top:533px;width:350px;height:1px;background:#2c2c2c;"></div>
<div class="a" style="left:1789px;top:411px;width:1px;height:52px;background:#2c2c2c;"></div>
<div class="a" style="left:1789px;top:481px;width:1px;height:52px;background:#2c2c2c;"></div>
<div class="a" style="left:1869px;top:411px;width:1px;height:52px;background:#2c2c2c;"></div>
<div class="a" style="left:1869px;top:481px;width:1px;height:52px;background:#2c2c2c;"></div>
<svg style="left:1577.1px;top:400.5px" width="7" height="4.2" viewBox="0 0 7 4.2" ><path d="M0 0H7L3.5 4.2Z" fill="#fff"/></svg>
<div class="t" style="left:1593.40px;top:396.85px;font-size:12.3px;letter-spacing:-0.443px;color:#ececec;">Filters</div>
<div class="t" style="left:1588.00px;top:418.85px;font-size:12.3px;letter-spacing:-0.175px;color:#ececec;">Velocity feedback filter 1 type</div>
<div class="t" style="left:1817.50px;top:418.85px;font-size:12.3px;letter-spacing:-0.498px;color:#ececec;">Low pass</div>
<div class="t" style="left:1873.50px;top:418.85px;font-size:12.3px;color:#ececec;">-</div>
<div class="t" style="left:1588.00px;top:444.85px;font-size:12.3px;letter-spacing:-0.172px;color:#ececec;">Velocity feedback filter 1 frequency</div>
<div class="t" style="left:1847.16px;top:444.85px;font-size:12.3px;letter-spacing:-0.844px;color:#ececec;">100</div>
<div class="t" style="left:1873.00px;top:444.85px;font-size:12.3px;letter-spacing:-0.516px;color:#ececec;">Hz</div>
<svg style="left:1577.1px;top:470.4px" width="7" height="4.2" viewBox="0 0 7 4.2" ><path d="M0 0H7L3.5 4.2Z" fill="#fff"/></svg>
<div class="t" style="left:1593.40px;top:466.85px;font-size:12.3px;letter-spacing:-0.556px;color:#ececec;">Feedback</div>
<div class="t" style="left:1588.00px;top:488.85px;font-size:12.3px;letter-spacing:-0.086px;color:#ececec;">Dig. hall polarity</div>
<div class="t" style="left:1818.90px;top:488.85px;font-size:12.3px;letter-spacing:-0.405px;color:#ececec;">Standard</div>
<div class="t" style="left:1873.50px;top:488.85px;font-size:12.3px;color:#ececec;">-</div>
<div class="t" style="left:1588.00px;top:514.85px;font-size:12.3px;letter-spacing:-0.070px;color:#ececec;">Dig. hall filter</div>
<div class="t" style="left:1820.05px;top:514.85px;font-size:12.3px;letter-spacing:-0.548px;color:#ececec;">100 MHz</div>
<div class="t" style="left:1873.50px;top:514.85px;font-size:12.3px;color:#ececec;">-</div>
<div class="t" style="left:1593.40px;top:791.50px;font-size:10px;letter-spacing:-0.051px;">Add Parameter</div>
<div class="a" style="left:0px;top:806px;width:1920px;height:4px;background:#3c3a3c;"></div>
<div class="a" style="left:0px;top:809.5px;width:1204px;height:22.5px;background:#007acc;border-radius:0 3px 0 0"></div>
<div class="t" style="left:10.50px;top:816.50px;font-size:10px;letter-spacing:-0.035px;">Terminal</div>
<svg style="left:1182.5px;top:816.7px" width="9" height="9" viewBox="0 0 9 9" ><path d="M0.5 0.5L8.5 8.5M8.5 0.5L0.5 8.5" stroke="#e8f2fb" stroke-width="1.2" fill="none"/></svg>
<div class="a" style="left:0px;top:832px;width:1204px;height:30px;background:#383838;"></div>
<svg style="left:6.6px;top:843.6px" width="11" height="7" viewBox="0 0 11 7"><path d="M0 3.5Q2.4 0 5.5 0Q8.6 0 11 3.5Q8.6 7 5.5 7Q2.4 7 0 3.5Z" fill="#fff"/><circle cx="5.5" cy="3.5" r="2.2" fill="#383838"/><circle cx="5.5" cy="3.5" r="1.5" fill="#fff"/><circle cx="4.9" cy="2.9" r="0.8" fill="#383838"/></svg>
<svg style="left:1187.5px;top:841.5px" width="9" height="11" viewBox="0 0 9 11" ><path d="M0.3 1.3H3V0.6Q3 0.2 3.4 0.2H5.6Q6 0.2 6 0.6V1.3H8.7V2.5H0.3Z M0.9 3.1H8.1L7.7 10Q7.65 10.8 6.9 10.8H2.1Q1.35 10.8 1.3 10Z" fill="#fff"/></svg>
<div class="a" style="left:0px;top:862px;width:1204px;height:147.5px;background:#292625;"></div>
<div class="t" style="left:4.00px;top:864.50px;font-size:10px;letter-spacing:-0.020px;font-family:'DejaVu Sans Mono','Liberation Mono',monospace;color:#e4e4e4;">Disabling motor</div>
<div class="t" style="left:4.00px;top:877.50px;font-size:10px;letter-spacing:-0.020px;font-family:'DejaVu Sans Mono','Liberation Mono',monospace;color:#e4e4e4;">CONFIGURATION OF THE TEST</div>
<div class="t" style="left:4.00px;top:890.50px;font-size:10px;letter-spacing:-0.020px;font-family:'DejaVu Sans Mono','Liberation Mono',monospace;color:#e4e4e4;">Set pair poles to 1</div>
<div class="t" style="left:4.00px;top:903.50px;font-size:10px;letter-spacing:-0.020px;font-family:'DejaVu Sans Mono','Liberation Mono',monospace;color:#e4e4e4;">Mode of operation set to Current mode</div>
<div class="t" style="left:4.00px;top:916.50px;font-size:10px;letter-spacing:-0.020px;font-family:'DejaVu Sans Mono','Liberation Mono',monospace;color:#e4e4e4;">Set phasing mode to No phasing</div>
<div class="t" style="left:4.00px;top:929.50px;font-size:10px;letter-spacing:-0.020px;font-family:'DejaVu Sans Mono','Liberation Mono',monospace;color:#e4e4e4;">Target quadrature current set to zero</div>
<div class="t" style="left:4.00px;top:942.50px;font-size:10px;letter-spacing:-0.020px;font-family:'DejaVu Sans Mono','Liberation Mono',monospace;color:#e4e4e4;">Target direct current set to zero</div>
<div class="t" style="left:4.00px;top:955.50px;font-size:10px;letter-spacing:-0.020px;font-family:'DejaVu Sans Mono','Liberation Mono',monospace;color:#e4e4e4;">Commutation feedback set to Internal Generator</div>
<div class="t" style="left:4.00px;top:968.50px;font-size:10px;letter-spacing:-0.020px;font-family:'DejaVu Sans Mono','Liberation Mono',monospace;color:#e4e4e4;">START OF THE TEST</div>
<div class="t" style="left:4.00px;top:981.50px;font-size:10px;letter-spacing:-0.020px;font-family:'DejaVu Sans Mono','Liberation Mono',monospace;color:#e4e4e4;">Disabling motor</div>
<svg style="left:1192.0px;top:866.75px" width="8" height="6.5" viewBox="0 0 8 6.5" ><path d="M0 6.5H8L4.0 0Z" fill="#8a8a8a"/></svg>
<div class="a" style="left:1192px;top:984px;width:8.5px;height:5.3px;background:#7a7a7a;"></div>
<svg style="left:1192.0px;top:998.75px" width="8" height="6.5" viewBox="0 0 8 6.5" ><path d="M0 0H8L4.0 6.5Z" fill="#8a8a8a"/></svg>
<div class="a" style="left:0px;top:1009.5px;width:1204px;height:30.5px;background:#383838;"></div>
<div class="a" style="left:1204px;top:810px;width:3px;height:230px;background:#232323;"></div>
<div class="a" style="left:1207px;top:810px;width:713px;height:22px;background:#363d40;"></div>
<div class="t" style="left:1217.00px;top:816.50px;font-size:10px;letter-spacing:0.214px;">Errors</div>
<svg style="left:1898.7px;top:816.7px" width="9" height="9" viewBox="0 0 9 9" ><path d="M0.5 0.5L8.5 8.5M8.5 0.5L0.5 8.5" stroke="#dedede" stroke-width="1.2" fill="none"/></svg>
<div class="a" style="left:1207px;top:832px;width:713px;height:208px;background:#383838;"></div>
<svg style="left:1903.1px;top:841.5px" width="9" height="11" viewBox="0 0 9 11" ><path d="M0.3 1.3H3V0.6Q3 0.2 3.4 0.2H5.6Q6 0.2 6 0.6V1.3H8.7V2.5H0.3Z M0.9 3.1H8.1L7.7 10Q7.65 10.8 6.9 10.8H2.1Q1.35 10.8 1.3 10Z" fill="#fff"/></svg>
<div class="a" style="left:1207px;top:862px;width:713px;height:38.5px;background:#282828;"></div>
<div class="t" style="left:1218.30px;top:875.75px;font-size:12.5px;letter-spacing:-0.452px;font-weight:bold;">Timestamp</div>
<div class="t" style="left:1367.00px;top:875.75px;font-size:12.5px;letter-spacing:-0.515px;font-weight:bold;">Source</div>
<div class="t" style="left:1494.50px;top:875.75px;font-size:12.5px;letter-spacing:-0.977px;font-weight:bold;">Axis</div>
<div class="t" style="left:1541.30px;top:875.75px;font-size:12.5px;letter-spacing:-0.586px;font-weight:bold;">Category</div>
<div class="t" style="left:1620.50px;top:875.75px;font-size:12.5px;letter-spacing:-0.605px;font-weight:bold;">Error id</div>
<div class="t" style="left:1733.50px;top:875.75px;font-size:12.5px;letter-spacing:-0.479px;font-weight:bold;">Description</div>
<div class="t" style="left:1862.50px;top:875.75px;font-size:12.5px;letter-spacing:-0.318px;font-weight:bold;">Severity</div>
<div class="a" style="left:1290px;top:901px;width:1px;height:23px;background:#303030;"></div>
<div class="a" style="left:1483px;top:901px;width:1px;height:23px;background:#303030;"></div>
<div class="a" style="left:1530px;top:901px;width:1px;height:23px;background:#303030;"></div>
<div class="a" style="left:1602px;top:901px;width:1px;height:23px;background:#303030;"></div>
<div class="a" style="left:1678px;top:901px;width:1px;height:23px;background:#303030;"></div>
<div class="a" style="left:1850px;top:901px;width:1px;height:23px;background:#303030;"></div>
<div class="a" style="left:1207px;top:900.5px;width:713px;height:1px;background:#333;"></div>
<div class="a" style="left:1207px;top:924px;width:713px;height:1px;background:#333;"></div>
<div class="t" style="left:1215.50px;top:906.85px;font-size:12.3px;letter-spacing:-0.801px;color:#ececec;">12:29:19</div>
<div class="t" style="left:1299.50px;top:906.85px;font-size:12.3px;letter-spacing:-0.512px;color:#ececec;">CAP-NET-C - Drive (192.168.2.22)</div>
<div class="t" style="left:1490.00px;top:906.85px;font-size:12.3px;letter-spacing:-0.503px;color:#ececec;">Axis 1</div>
<div class="t" style="left:1538.30px;top:906.85px;font-size:12.3px;letter-spacing:-0.269px;color:#ececec;">Cyclic</div>
<div class="t" style="left:1610.00px;top:906.85px;font-size:12.3px;letter-spacing:-0.875px;color:#ececec;">0x00007371</div>
<div class="t" style="left:1687.40px;top:906.85px;font-size:12.3px;letter-spacing:-0.083px;color:#ececec;">Halls combination error</div>
<div class="t" style="left:1859.50px;top:906.85px;font-size:12.3px;letter-spacing:-0.566px;color:#ececec;">Error</div>
</body></html>
